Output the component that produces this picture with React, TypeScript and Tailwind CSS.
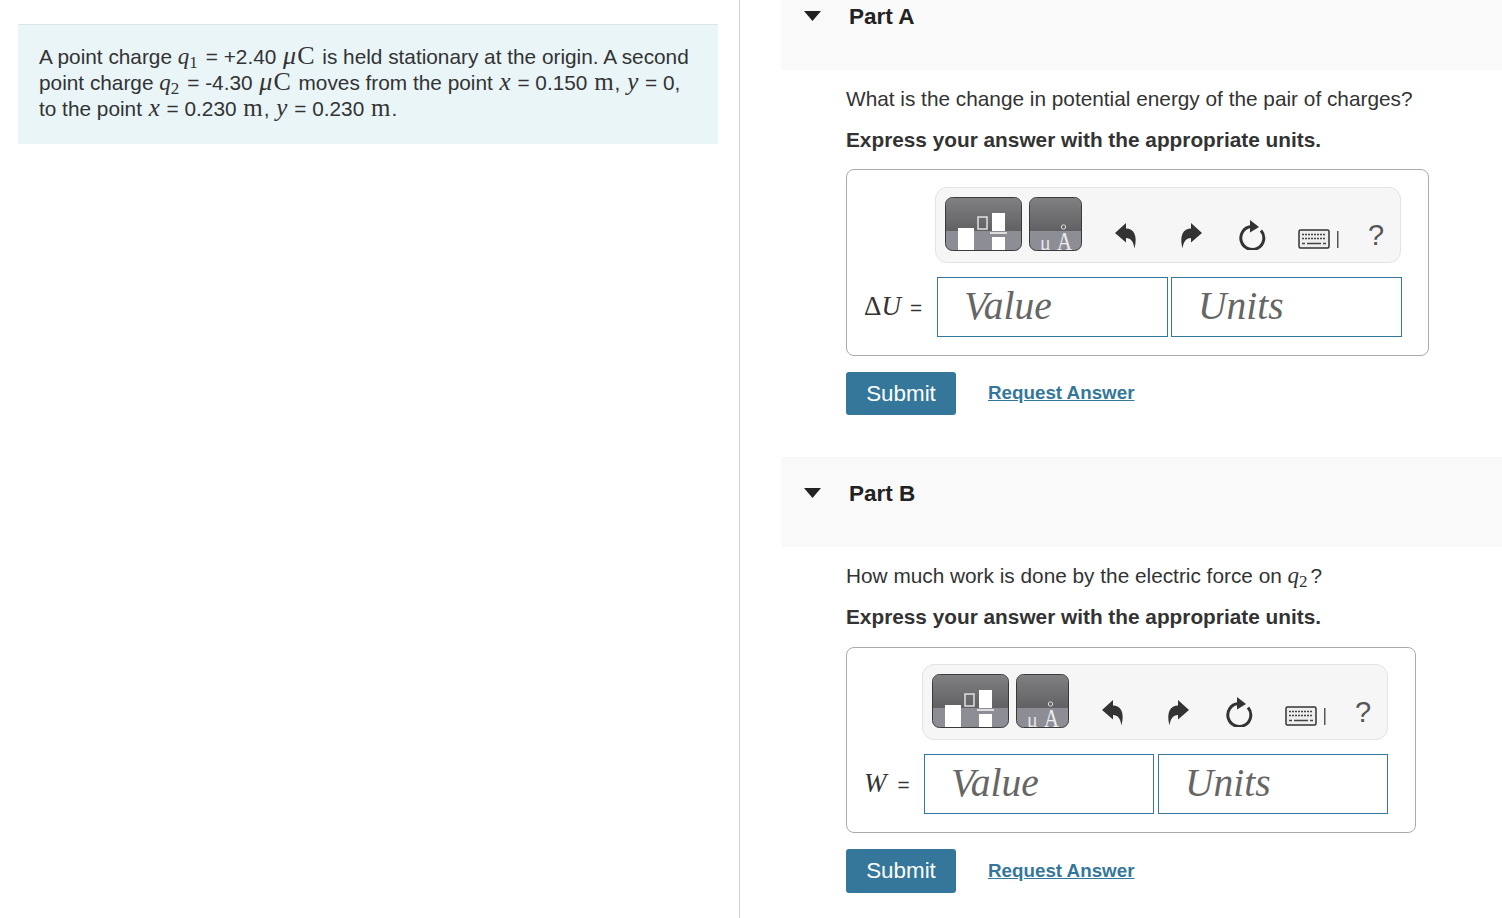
const sans = "font-['Liberation_Sans',Arial,sans-serif]";
const serif = "font-['Liberation_Serif',serif]";

const M = ({ children }: { children: React.ReactNode }) => (
  <span className={`${serif} mx-[1px] text-[25px] italic leading-none`}>{children}</span>
);

const Up = ({ children }: { children: React.ReactNode }) => (
  <span className={`${serif} px-[1px] text-[25px] leading-none`}>{children}</span>
);

const MicroC = () => (
  <span className={`${serif} ml-[1px] mr-[2px] text-[26px] leading-none`}>
    <i>μ</i>
    <span className="ml-[1px]">C</span>
  </span>
);

const Q = ({ n, space = "mr-[8px]" }: { n: number; space?: string }) => (
  <span className={space}>
    <span className={`${serif} text-[23px] italic leading-none`}>q</span>
    <span className={`${serif} relative top-[4px] text-[17px] leading-none`}>{n}</span>
  </span>
);

const TemplateButton = () => (
  <svg width="77" height="54" viewBox="0 0 77 54" className="shrink-0">
    <defs>
      <linearGradient id="tplTop" x1="0" y1="0" x2="0" y2="1">
        <stop offset="0" stopColor="#808082" />
        <stop offset="1" stopColor="#616163" />
      </linearGradient>
    </defs>
    <rect x="0.5" y="0.5" width="76" height="53" rx="7" fill="#8d8d95" stroke="#3a3a3a" />
    <path d="M1 8a7 7 0 0 1 7-7h61a7 7 0 0 1 7 7v26H1z" fill="url(#tplTop)" />
    <rect x="13" y="31" width="16" height="22" fill="#fff" />
    <rect x="33" y="20" width="9" height="12" fill="none" stroke="#e0e0e0" strokeWidth="1.5" />
    <rect x="47" y="16" width="13" height="18" fill="#fff" />
    <rect x="45" y="35" width="17" height="2" fill="#ddd" />
    <rect x="47" y="40" width="13" height="13" fill="#fff" />
  </svg>
);

const UnitButton = () => (
  <svg width="53" height="54" viewBox="0 0 53 54" className="shrink-0 overflow-visible">
    <defs>
      <linearGradient id="unitTop" x1="0" y1="0" x2="0" y2="1">
        <stop offset="0" stopColor="#808082" />
        <stop offset="1" stopColor="#616163" />
      </linearGradient>
      <clipPath id="unitClip">
        <rect width="53" height="53" />
      </clipPath>
    </defs>
    <rect x="0.5" y="0.5" width="52" height="53" rx="7" fill="#8d8d95" stroke="#3a3a3a" />
    <path d="M1 8a7 7 0 0 1 7-7h37a7 7 0 0 1 7 7v26H1z" fill="url(#unitTop)" />
    <circle cx="34.500" cy="30" r="2.200" fill="none" stroke="#ddd" />
    <g clipPath="url(#unitClip)">
      <text x="11" y="53" fill="#e8e8e8" fontSize="20" fontFamily="Liberation Serif, serif">μ</text>
    </g>
    <text x="28" y="53" fill="#eee" fontSize="25" textLength="15" lengthAdjust="spacingAndGlyphs" fontFamily="Liberation Serif, serif">A</text>
  </svg>
);

const UndoIcon = ({ flip }: { flip?: boolean }) => (
  <svg width="24" height="27" viewBox="0 0 24 27" className={flip ? "-scale-x-100" : ""}>
    <path d="M0 11 11 1v5.500C18.500 6.500 23 13 19.500 26.500 18.500 20 16 16 11 16v4.500z" fill="#333" />
  </svg>
);

const ResetIcon = () => (
  <svg width="28" height="30" viewBox="0 0 28 30">
    <path d="M13 6.600A11.500 11.500 0 1 0 23 10.500" fill="none" stroke="#333" strokeWidth="3" />
    <path d="M12 0l9 7-9 5.500z" fill="#333" />
  </svg>
);

const KeyboardIcon = () => (
  <svg width="42" height="20" viewBox="0 0 42 20">
    <rect x="1" y="1" width="30" height="18" rx="1.500" fill="#eee" stroke="#333" strokeWidth="1.500" />
    <path d="M4 5.500h24M4 9.500h24" stroke="#444" strokeWidth="1.500" strokeDasharray="2 1" />
    <path d="M4 14.500h3M9 14.500h14M25 14.500h3" stroke="#444" strokeWidth="1.500" />
    <rect x="39" y="2" width="1.500" height="17" fill="#555" />
  </svg>
);

const Toolbar = () => (
  <div className="flex h-[76px] w-[466px] items-start rounded-[12px] border border-[#e3e3e3] bg-[#f6f6f6] pl-[9px] pt-[9px]">
    <TemplateButton />
    <div className="ml-[7px]">
      <UnitButton />
    </div>
    <div className="ml-[14px] flex h-[54px] items-center pt-[22px]">
      <div className="flex w-[62px] justify-center"><UndoIcon /></div>
      <div className="flex w-[64px] justify-center"><UndoIcon flip /></div>
      <div className="flex w-[60px] justify-center"><ResetIcon /></div>
      <div className="mt-[8px] flex w-[62px] justify-center pl-[12px]"><KeyboardIcon /></div>
      <div className={`${sans} ml-[7px] flex w-[50px] justify-center text-[29px] leading-none text-[#555]`}>?</div>
    </div>
  </div>
);

const AnswerField = ({ placeholder, width }: { placeholder: string; width: string }) => (
  <input
    readOnly
    placeholder={placeholder}
    className={`${serif} h-[60px] ${width} border border-[#34779b] bg-white pb-[2px] pl-[26px] text-[39.5px] italic outline-none placeholder:text-[#666]`}
  />
);

const AnswerBox = ({
  boxClass,
  indent,
  label,
  fieldWidth,
  gap,
}: {
  boxClass: string;
  indent: string;
  label: React.ReactNode;
  fieldWidth: string;
  gap: string;
}) => (
  <div className={`${boxClass} rounded-[8px] border border-[#aaa] pb-[18px] pl-[17px]`}>
    <div className={indent}>
      <Toolbar />
    </div>
    <div className="mt-[14px] flex items-center">
      {label}
      <div className={`flex ${gap}`}>
        <AnswerField placeholder="Value" width={fieldWidth} />
        <AnswerField placeholder="Units" width={fieldWidth} />
      </div>
    </div>
  </div>
);

const Part = ({
  name,
  top,
  height,
  question,
  boxTop,
  submitHeight,
  box,
}: {
  name: string;
  top: string;
  height: string;
  question: React.ReactNode;
  boxTop: string;
  submitHeight: string;
  box: React.ReactNode;
}) => (
  <section>
    <div className={`flex ${height} items-start bg-[#f9f9f9] pl-[23px] ${top}`}>
      <svg width="17" height="10" viewBox="0 0 17 10" className="mt-[7px] shrink-0">
        <path d="M0 0h17l-8.500 10z" fill="#222" />
      </svg>
      <h2 className="ml-[28px] text-[22.5px] font-bold leading-[26px] text-[#222]">{name}</h2>
    </div>
    <div className="pl-[65px]">
      <p className="mt-[16px] h-[26px] text-[20.8px] leading-[26px] text-[#333]">{question}</p>
      <p className="mt-[15px] h-[26px] text-[20.8px] font-bold leading-[26px] text-[#333]">
        Express your answer with the appropriate units.
      </p>
      <div className={boxTop}>{box}</div>
      <div className="mt-[16px] flex items-center">
        <button className={`${submitHeight} w-[110px] rounded-[3px] bg-[#34779b] text-[22.4px] text-white`}>Submit</button>
        <a className="ml-[32px] text-[18.8px] font-bold text-[#34779b] underline">Request Answer</a>
      </div>
    </div>
  </section>
);

export default function App() {
  return (
    <div className={`${sans} flex h-[918px] w-[1502px] overflow-hidden bg-white`}>
      <aside className="h-full w-[740px] shrink-0 border-r border-[#d0d0d0] pl-[18px] pr-[21px] pt-[24px]">
        <div className="h-[120px] border-t border-[#dfe5e6] bg-[#e9f5f7] px-[21px] pt-[18px] text-[20.8px] leading-[26px] text-[#333]">
          <p className="h-[26px]">
            A point charge <Q n={1} />= +2.40 <MicroC /> is held stationary at the origin. A second
          </p>
          <p className="h-[26px]">
            point charge <Q n={2} />= -4.30 <MicroC /> moves from the point <M>x</M> = 0.150 <Up>m</Up>, <M>y</M> = 0,
          </p>
          <p className="h-[26px]">
            to the point <M>x</M> = 0.230 <Up>m</Up>, <M>y</M> = 0.230 <Up>m</Up>.
          </p>
        </div>
      </aside>
      <main className="ml-[41px] flex-1">
        <Part
          name="Part A"
          top="pt-[4px]"
          height="h-[70px]"
          boxTop="mt-[16px]"
          submitHeight="h-[43px]"
          question="What is the change in potential energy of the pair of charges?"
          box={
            <AnswerBox
              boxClass="w-[583px] pt-[17px]"
              indent="ml-[71px]"
              fieldWidth="w-[231px]"
              gap="gap-[3px]"
              label={
                <span className="w-[73px] shrink-0 pb-[2px] text-[20.8px] text-[#333]">
                  <span className={`${serif} text-[27px]`}>Δ<i>U</i></span>
                  <span className="ml-[9px]">=</span>
                </span>
              }
            />
          }
        />
        <div className="mt-[42px]">
          <Part
            name="Part B"
            top="pt-[24px]"
            height="h-[90px]"
            boxTop="mt-[17px]"
            submitHeight="h-[44px]"
            question={
              <>
                How much work is done by the electric force on <Q n={2} space="mr-[3px]" />?
              </>
            }
            box={
              <AnswerBox
                boxClass="w-[570px] pt-[16px]"
                indent="ml-[58px]"
                fieldWidth="w-[230px]"
                gap="gap-[4px]"
                label={
                  <span className="w-[60px] shrink-0 pb-[2px] text-[20.8px] text-[#333]">
                    <span className={`${serif} text-[27px] italic`}>W</span>
                    <span className="ml-[11px]">=</span>
                  </span>
                }
              />
            }
          />
        </div>
      </main>
    </div>
  );
}
